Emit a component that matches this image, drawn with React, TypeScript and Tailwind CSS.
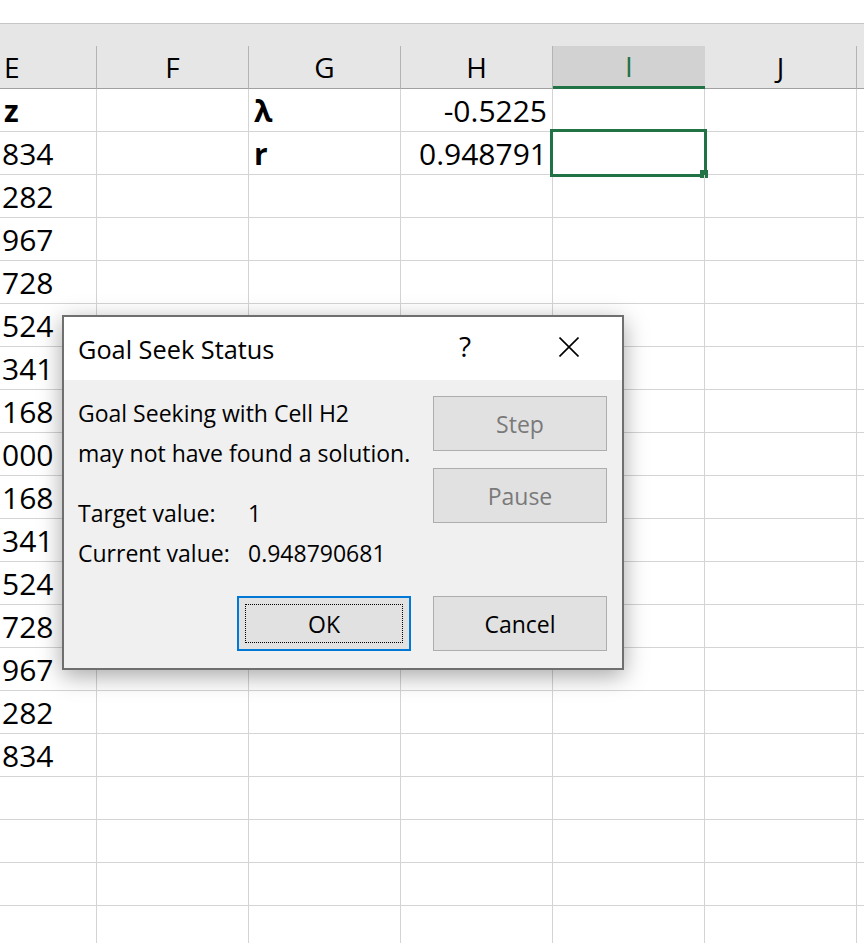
/**
 * Excel sheet fragment with the Goal Seek Status dialog on top.
 */

const FONT = "font-['Open_Sans','Noto_Sans',sans-serif]";

const COLS = ['F', 'G', 'H', 'I', 'J'];

const ROWS: { z: string; label?: string; value?: string }[] = [
  { z: 'z', label: 'λ', value: '-0.5225' },
  { z: '834', label: 'r', value: '0.948791' },
  { z: '282' },
  { z: '967' },
  { z: '728' },
  { z: '524' },
  { z: '341' },
  { z: '168' },
  { z: '000' },
  { z: '168' },
  { z: '341' },
  { z: '524' },
  { z: '728' },
  { z: '967' },
  { z: '282' },
  { z: '834' },
  { z: '' },
  { z: '' },
  { z: '' },
  { z: '' },
];

function ColumnHeader() {
  return (
    <div className="flex h-[66px] border-t border-[#c6c6c6] bg-[#e6e6e6] pt-[22px]">
      <div className="flex h-[43px] w-[97px] shrink-0 items-center border-r border-b border-r-[#b4b4b4] border-b-[#a0a0a0] pl-[4px] text-[28px]">
        E
      </div>
      {COLS.map((col) =>
        col === 'I' ? (
          <div
            key={col}
            className="flex h-[43px] w-[152px] shrink-0 items-center justify-center border-b-[3px] border-[#217346] bg-[#d2d2d2] text-[28px] text-[#217346]"
          >
            {col}
          </div>
        ) : (
          <div
            key={col}
            className="flex h-[43px] w-[152px] shrink-0 items-center justify-center border-r border-b border-r-[#b4b4b4] border-b-[#a0a0a0] text-[28px]"
          >
            {col}
          </div>
        ),
      )}
      <div className="h-[43px] flex-1 border-b border-[#a0a0a0]" />
    </div>
  );
}

function SheetRow({ z, label, value, selected }: { z: string; label?: string; value?: string; selected?: boolean }) {
  const cell = 'h-[43px] w-[152px] shrink-0 border-r border-b border-[#d4d4d4]';
  const isHeading = z === 'z';

  return (
    <div className="flex text-[30px] leading-[44px]">
      <div
        className={`h-[43px] w-[97px] shrink-0 border-r border-b border-[#d4d4d4] ${
          isHeading ? 'pl-[4px] font-bold' : 'pl-[2px]'
        }`}
      >
        {z}
      </div>
      <div className={cell} />
      <div className={`${cell} pl-[5px] font-bold`}>{label}</div>
      <div className={`${cell} pr-[5px] text-right`}>{value}</div>
      <div className={`${cell} relative`}>
        {selected && (
          <div className="absolute top-[-3px] left-[-3px] h-[48px] w-[157px] border-[3px] border-[#217346]">
            <div className="absolute right-[-4px] bottom-[-4px] h-[8px] w-[8px] bg-[#217346]" />
          </div>
        )}
      </div>
      <div className={cell} />
      <div className="h-[43px] flex-1 border-b border-[#d4d4d4]" />
    </div>
  );
}

function DialogButton({ children, disabled, className = '' }: { children: string; disabled?: boolean; className?: string }) {
  return (
    <button
      className={`flex h-[55px] w-[174px] items-center justify-center border border-[#adadad] bg-[#e1e1e1] pt-[2px] text-[23px] ${
        disabled ? 'text-[#7a7a7a]' : 'text-black'
      } ${className}`}
    >
      {children}
    </button>
  );
}

function GoalSeekDialog() {
  return (
    <div className="absolute top-[315px] left-[62px] w-[562px] border-2 border-[#6f6f6f] bg-[#f0f0f0] text-[23px] text-black shadow-[0_6px_22px_rgba(0,0,0,0.35)]">
      <div className="relative flex h-[63px] items-center bg-white pt-[2px] pl-[14px] text-[25.3px]">
        Goal Seek Status
        <span className="absolute top-[7px] left-[395px] text-[28px] leading-[44px]">?</span>
        <svg className="absolute top-[20px] left-[495px]" width="20" height="20" viewBox="0 0 20 20">
          <path d="M0.5 0.5 L19.5 19.5 M19.5 0.5 L0.5 19.5" stroke="#000" strokeWidth="1.6" fill="none" />
        </svg>
      </div>

      <div className="flex h-[288px] pt-[13px] pl-[14px]">
        <div className="w-[355px] shrink-0 leading-[40px]">
          <div>Goal Seeking with Cell H2</div>
          <div>may not have found a solution.</div>
          <div className="mt-[20px] flex">
            <span className="w-[170px]">Target value:</span>
            <span>1</span>
          </div>
          <div className="flex">
            <span className="w-[170px]">Current value:</span>
            <span>0.948790681</span>
          </div>
          <button className="mt-[23px] ml-[159px] flex h-[55px] w-[174px] items-center justify-center border-2 border-[#0078d7] bg-[#e1e1e1] px-[6px] py-[6px]">
            <span className="flex h-full w-full items-center justify-center border border-dotted border-black">OK</span>
          </button>
        </div>

        <div className="flex flex-col">
          <DialogButton disabled className="mt-[3px]">Step</DialogButton>
          <DialogButton disabled className="mt-[17px]">Pause</DialogButton>
          <DialogButton className="mt-[73px]">Cancel</DialogButton>
        </div>
      </div>
    </div>
  );
}

export default function App() {
  return (
    <div className={`relative h-[943px] w-[864px] overflow-hidden bg-white text-black ${FONT}`}>
      <div className="h-[23px]" />
      <ColumnHeader />
      {ROWS.map((row, i) => (
        <SheetRow key={i} {...row} selected={i === 1} />
      ))}
      <GoalSeekDialog />
    </div>
  );
}
